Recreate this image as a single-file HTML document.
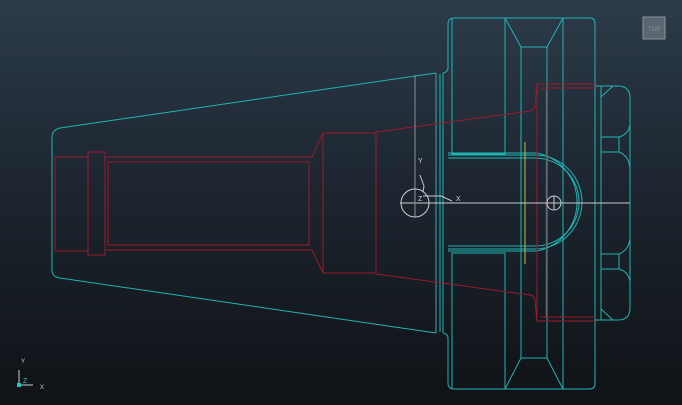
<!DOCTYPE html>
<html><head><meta charset="utf-8"><style>
html,body{margin:0;padding:0;}
body{width:682px;height:405px;overflow:hidden;background:linear-gradient(#2c3b4a 0%,#1d2630 45%,#0f1216 100%);}
svg{position:absolute;left:0;top:0}
text{font-family:"Liberation Sans",sans-serif;}
</style></head><body>
<svg width="682" height="405" viewBox="0 0 682 405" fill="none" stroke-width="1">
<g stroke="#1fb4b4">
<path d="M436,73 L60,128 Q52,130 52,137 L52,270 Q52,277 60,278 L436,333"/>
<path d="M436,73 L436,333 M440,74 L440,332 M443,73 L443,333"/>
<path d="M443,73 Q448,72 448,68 L448,24 Q448,18 454,18 L590,18 Q595,18 595,24 L595,383 Q595,389 590,389 L454,389 Q448,389 448,383 L448,338 Q448,334 443,333"/>
<path d="M452,18 L452,154 L505,154 L505,18 M505,18 L521,47 L547,47 L563,18 M521,47 L521,358 M547,47 L547,358 M563,18 L563,389"/>
<path d="M452,389 L452,253 L505,253 L505,389 M505,389 L521,358 L547,358 L563,389"/>
<path d="M448,155 L535,155 A47,47 0 0 1 535,249 L448,249"/>
<path d="M448,158 L535,158 A44,44 0 0 1 535,246 L448,246"/>
<path d="M448,153 L537,153 A50,50 0 0 1 537,251 L448,251"/>
<path d="M595,86 L618,86 Q630,86 630,98 L630,308 Q630,320 618,320 L595,320"/>
<path d="M601,137 L619,137 Q629,134 630,124 M601,152 L619,152 Q629,156 630,168 M601,254 L619,254 Q629,250 630,238 M601,269 L619,269 Q629,272 630,282"/>
<path d="M601,86 L601,320 M601,97 L613,86 M601,309 L613,320 M619,137 L619,152 M619,254 L619,269"/>
</g>
<g stroke="#9a1a2a">
<path d="M55,157 L88,157 L88,251 L55,251 Z"/>
<path d="M88,152 L105,152 L105,255 L88,255 Z"/>
<path d="M105,157 L312,157 L323,133 L376,133 L376,273 L323,273 L312,250 L105,250"/>
<path d="M108,162 L309,162 L309,245 L108,245 Z"/>
<path d="M323,133 L323,273"/>
<path d="M376,132 L530,111 Q535,110 535,105 L537,84 L595,84 M376,274 L530,295 Q535,296 535,301 L537,321 L595,321"/>
<path d="M537,84 L537,321 M546,88 L546,318 M540,88 L595,88 M540,317 L595,317"/>
</g>
<path d="M525,142 L525,264" stroke="#b8c040"/>
<g stroke="#c8ccd0">
<path d="M400,203 L630,203"/>
<path d="M415,75 L415,217" stroke="#8a9098"/>
<circle cx="415" cy="203" r="14"/>
<circle cx="554" cy="203" r="7"/>
<path d="M554,196 L554,210"/>
<path d="M420,175 L424,186 L423,192 M423,196 L441,196 L452,201"/>
</g>
<g fill="#d0d4d8" font-size="7">
<text x="418" y="163">Y</text><text x="418" y="201">Z</text><text x="456" y="201">X</text>
</g>
<rect x="643" y="17" width="22" height="22" fill="#5a6670" stroke="#8a949c"/>
<text x="648" y="31" font-size="6" fill="#8a949c">TOP</text>
<g stroke="#c8ccd0">
<path d="M19,385 L19,370 M19,385 L33,385"/>
</g>
<rect x="17" y="383" width="4" height="4" fill="#1fc8c8"/>
<text x="21" y="363" font-size="6" fill="#c8ccd0">Y</text>
<text x="40" y="389" font-size="6" fill="#c8ccd0">X</text>
<text x="23" y="383" font-size="7" fill="#1fc8c8">Z</text>
</svg>
</body></html>
